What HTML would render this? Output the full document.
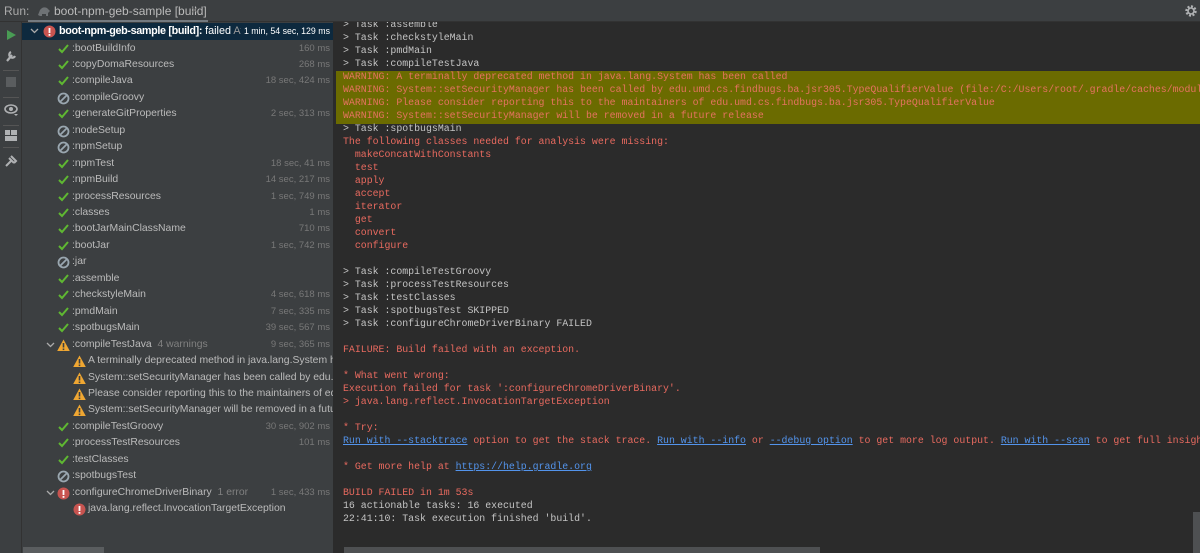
<!DOCTYPE html>
<html><head><meta charset="utf-8"><style>
*{margin:0;padding:0;box-sizing:border-box}
body{width:1200px;height:553px;overflow:hidden;background:#2b2b2b;font-family:"Liberation Sans",sans-serif;position:relative}
#top{position:absolute;left:0;top:0;width:1200px;height:22px;background:#3c3f41;border-bottom:1px solid #323232}
#lt{position:absolute;left:0;top:22px;width:22px;height:531px;background:#3c3f41;border-right:1px solid #323232}
#tree{position:absolute;left:22px;top:22px;width:311px;height:531px;background:#3c3f41;overflow:hidden}
#div{position:absolute;left:333px;top:22px;width:3px;height:531px;background:#2b2b2b}
.r{position:absolute;left:0;width:311px;height:16px;font-size:10.4px;color:#bbbbbb;line-height:16px;white-space:nowrap;overflow:hidden}
.r .t{position:absolute;right:3px;top:0;font-size:9.5px;color:#787878;background:#3c3f41;padding-left:3px}
.r svg{position:absolute;top:2px}
.r span.n{position:absolute;top:0}
.g{color:#808080}
#con{position:absolute;left:343px;top:18px;font-family:"Liberation Mono",monospace;font-size:9.9px;line-height:13px;color:#c4c4c4;white-space:pre}
.w{color:#e5735f}
.e{color:#e86a5f}
.a{color:#5394ec;text-decoration:underline}
#hl{position:absolute;left:336px;top:71px;width:864px;height:53px;background:#6b6b00}
</style></head><body>
<div id="hl"></div>
<div id="con"><span>&gt; Task :assemble</span>
&gt; Task :checkstyleMain
&gt; Task :pmdMain
&gt; Task :compileTestJava
<span class="w">WARNING: A terminally deprecated method in java.lang.System has been called</span>
<span class="w">WARNING: System::setSecurityManager has been called by edu.umd.cs.findbugs.ba.jsr305.TypeQualifierValue (file:/C:/Users/root/.gradle/caches/modul</span>
<span class="w">WARNING: Please consider reporting this to the maintainers of edu.umd.cs.findbugs.ba.jsr305.TypeQualifierValue</span>
<span class="w">WARNING: System::setSecurityManager will be removed in a future release</span>
&gt; Task :spotbugsMain
<span class="e">The following classes needed for analysis were missing:
  makeConcatWithConstants
  test
  apply
  accept
  iterator
  get
  convert
  configure</span>

&gt; Task :compileTestGroovy
&gt; Task :processTestResources
&gt; Task :testClasses
&gt; Task :spotbugsTest SKIPPED
&gt; Task :configureChromeDriverBinary FAILED

<span class="e">FAILURE: Build failed with an exception.</span>

<span class="e">* What went wrong:
Execution failed for task ':configureChromeDriverBinary'.
&gt; java.lang.reflect.InvocationTargetException</span>

<span class="e">* Try:</span>
<span class="a">Run with --stacktrace</span><span class="e"> option to get the stack trace. </span><span class="a">Run with --info</span><span class="e"> or </span><span class="a">--debug option</span><span class="e"> to get more log output. </span><span class="a">Run with --scan</span><span class="e"> to get full insigh</span>

<span class="e">* Get more help at </span><span class="a">https://help.gradle.org</span>

<span class="e">BUILD FAILED in 1m 53s</span>
16 actionable tasks: 16 executed
22:41:10: Task execution finished 'build'.</div>
<div style="position:absolute;left:344px;top:547px;width:476px;height:6px;background:#4e5052"></div>
<div style="position:absolute;left:1193px;top:512px;width:7px;height:41px;background:#4e5052"></div>
<div id="top">
<span style="position:absolute;left:4px;top:4px;font-size:12px;color:#aaaaaa">Run:</span>
<svg style="position:absolute;left:37px;top:5px" width="14" height="12" viewBox="0 0 14 12"><path d="M1 10 L3 5 Q6 1 10 3 L13 6 L11 8 L11 11 L9 11 L9 9 L5 9 L5 11 L3 11 Z" fill="#6e7275"/></svg>
<span style="position:absolute;left:54px;top:4px;font-size:12px;color:#bbbbbb">boot-npm-geb-sample [build]</span>
<span style="position:absolute;left:191px;top:3px;font-size:12px;color:#6e6e6e">×</span>
<div style="position:absolute;left:28px;top:20px;width:180px;height:2px;background:#747a80"></div>
<svg style="position:absolute;left:1185px;top:5px" width="12" height="12" viewBox="0 0 12 12"><circle cx="6" cy="6" r="4.5" fill="none" stroke="#afb1b3" stroke-width="2.4" stroke-dasharray="2 1.5"/><circle cx="6" cy="6" r="3" fill="none" stroke="#afb1b3" stroke-width="1.6"/></svg>
</div>
<div id="lt">
<svg style="position:absolute;left:5px;top:7px" width="12" height="12"><path d="M2 1 L11 6 L2 11Z" fill="#499c54"/></svg>
<svg style="position:absolute;left:4px;top:27px" width="14" height="14"><path d="M3 12 L8 6 M7 3 A3 3 0 1 0 11 7" stroke="#afb1b3" stroke-width="2.2" fill="none"/></svg>
<div style="position:absolute;left:3px;top:48px;width:16px;height:1px;background:#555"></div>
<div style="position:absolute;left:6px;top:55px;width:10px;height:10px;background:#5a5d5f"></div>
<div style="position:absolute;left:3px;top:75px;width:16px;height:1px;background:#555"></div>
<svg style="position:absolute;left:4px;top:81px" width="15" height="14"><ellipse cx="7" cy="6" rx="6" ry="4" fill="none" stroke="#afb1b3" stroke-width="1.6"/><circle cx="7" cy="6" r="2" fill="#afb1b3"/><path d="M10 11 L14 11 L12 13Z" fill="#afb1b3"/></svg>
<div style="position:absolute;left:3px;top:103px;width:16px;height:1px;background:#555"></div>
<svg style="position:absolute;left:5px;top:108px" width="12" height="11"><rect x="0" y="0" width="5" height="5" fill="#afb1b3"/><rect x="6" y="0" width="6" height="5" fill="#afb1b3"/><rect x="0" y="6" width="12" height="5" fill="#afb1b3"/></svg>
<div style="position:absolute;left:3px;top:125px;width:16px;height:1px;background:#555"></div>
<svg style="position:absolute;left:5px;top:132px" width="13" height="13"><path d="M1 12 L6 7 M4 4 L9 9 M6 2 L11 7 L9 9" stroke="#afb1b3" stroke-width="2" fill="none"/></svg>
</div>
<div id="tree">
<div class="r" style="top:1px;height:17px;background:#0d293e;line-height:17px">
<svg style="left:8px;top:5px" width="9" height="6"><path d="M1 1 L4.5 4.5 L8 1" stroke="#aaa" stroke-width="1.3" fill="none"/></svg>
<svg style="left:21px;top:2px" width="13" height="13"><circle cx="6.5" cy="6.5" r="6" fill="#c75450"/><rect x="5.6" y="3" width="1.8" height="5" fill="#fff"/><rect x="5.6" y="9" width="1.8" height="1.8" fill="#fff"/></svg>
<span class="n" style="left:37px;color:#ffffff;font-size:10.8px"><span style="font-weight:bold;letter-spacing:-0.35px">boot-npm-geb-sample [build]:</span> failed <span style="color:#9a9a9a">At 20</span></span>
<span class="t" style="background:#0d293e;color:#ffffff;line-height:17px;font-size:8.8px">1 min, 54 sec, 129 ms</span></div>
</div>
<div id="div"></div>
<script>
var rows=[
["c","bootBuildInfo","160 ms"],["c","copyDomaResources","268 ms"],["c","compileJava","18 sec, 424 ms"],["s","compileGroovy",""],["c","generateGitProperties","2 sec, 313 ms"],["s","nodeSetup",""],["s","npmSetup",""],["c","npmTest","18 sec, 41 ms"],["c","npmBuild","14 sec, 217 ms"],["c","processResources","1 sec, 749 ms"],["c","classes","1 ms"],["c","bootJarMainClassName","710 ms"],["c","bootJar","1 sec, 742 ms"],["s","jar",""],["c","assemble",""],["c","checkstyleMain","4 sec, 618 ms"],["c","pmdMain","7 sec, 335 ms"],["c","spotbugsMain","39 sec, 567 ms"],
["W","compileTestJava","9 sec, 365 ms","4 warnings"],
["w","A terminally deprecated method in java.lang.System has"],["w","System::setSecurityManager has been called by edu.umd."],["w","Please consider reporting this to the maintainers of edu.u"],["w","System::setSecurityManager will be removed in a future r"],
["c","compileTestGroovy","30 sec, 902 ms"],["c","processTestResources","101 ms"],["c","testClasses",""],["s","spotbugsTest",""],
["E","configureChromeDriverBinary","1 sec, 433 ms","1 error"],["e","java.lang.reflect.InvocationTargetException"]];
var ic={c:'<path d="M2 6 L5 9 L11 2" stroke="#5fb832" stroke-width="2" fill="none"/>',
s:'<circle cx="6.5" cy="6.5" r="5" stroke="#9aa7b0" stroke-width="1.8" fill="none"/><path d="M3 10 L10 3" stroke="#9aa7b0" stroke-width="1.8"/>',
w:'<path d="M6.5 0.5 L12.8 12 L0.2 12Z" fill="#f0a732"/><rect x="5.7" y="4" width="1.6" height="4.5" fill="#3c3f41"/><rect x="5.7" y="9.5" width="1.6" height="1.6" fill="#3c3f41"/>',
e:'<circle cx="6.5" cy="6.5" r="6" fill="#c75450"/><rect x="5.6" y="3" width="1.8" height="5" fill="#fff"/><rect x="5.6" y="9" width="1.8" height="1.8" fill="#fff"/>'};
var h='';
rows.forEach(function(r,i){var top=18.5+i*16.45;var k=r[0];var lvl=(k=="w"||k=="e")?1:0;var ik=k.toLowerCase();
var ix=lvl?51:35, tx=lvl?66:50;
h+='<div class="r" style="top:'+top+'px">';
if(k=="W"||k=="E")h+='<svg style="left:24px;top:5px" width="9" height="6"><path d="M1 1 L4.5 4.5 L8 1" stroke="#aaa" stroke-width="1.3" fill="none"/></svg>';
h+='<svg style="left:'+ix+'px" width="13" height="13">'+ic[ik]+'</svg>';
var txt=(lvl?'':':')+r[1];h+='<span class="n" style="left:'+tx+'px">'+txt+(r[3]?' <span class="g">&nbsp;'+r[3]+'</span>':'')+'</span>';
if(r[2])h+='<span class="t">'+r[2]+'</span>';h+='</div>';});
document.getElementById('tree').insertAdjacentHTML('beforeend',h);
</script>
<div style="position:absolute;left:23px;top:547px;width:81px;height:6px;background:#5a5d5f"></div>
</body></html>
